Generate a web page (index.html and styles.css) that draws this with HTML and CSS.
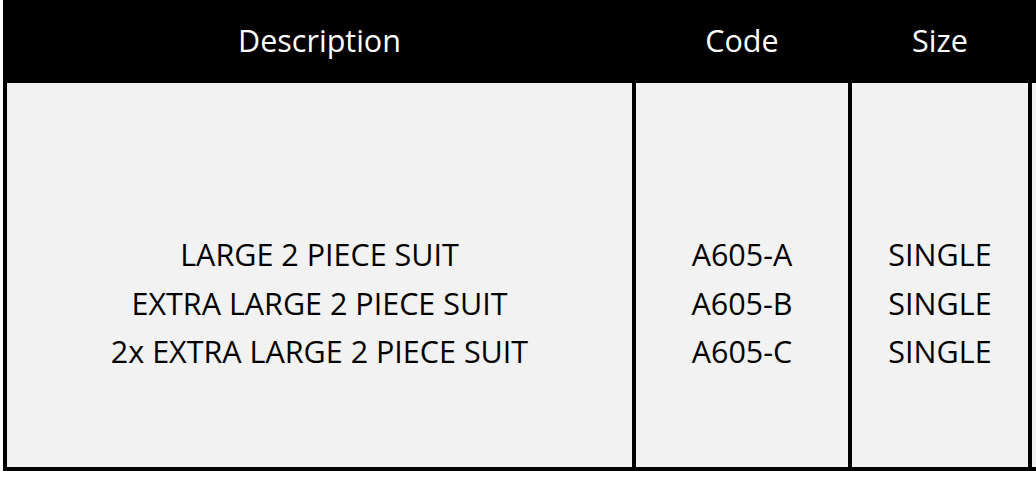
FILE: index.html
```html
<!DOCTYPE html>
<html lang="en">
<head>
<meta charset="utf-8">
<title>Suits</title>
<link rel="stylesheet" href="styles.css">
</head>
<body>
<div class="table">
  <div class="head">
    <div class="hcell">Description</div>
    <div class="hcell">Code</div>
    <div class="hcell">Size</div>
    <div class="hcell"></div>
  </div>
  <div class="body">
    <div class="cell">
      <div>LARGE 2 PIECE SUIT</div>
      <div>EXTRA LARGE 2 PIECE SUIT</div>
      <div>2x EXTRA LARGE 2 PIECE SUIT</div>
    </div>
    <div class="cell">
      <div>A605-A</div>
      <div>A605-B</div>
      <div>A605-C</div>
    </div>
    <div class="cell">
      <div>SINGLE</div>
      <div>SINGLE</div>
      <div>SINGLE</div>
    </div>
    <div class="cell"></div>
  </div>
</div>
</body>
</html>
```

FILE: styles.css
```css
html, body {
  margin: 0;
  padding: 0;
  background: #ffffff;
  overflow: hidden;
}
body {
  font-family: "Open Sans", "Noto Sans", sans-serif;
  font-size: 30.5px;
  color: #000;
}
.table {
  margin-left: 3px;
  width: 1033px;
}
.head, .body {
  display: grid;
  grid-template-columns: 629px 216px 180px 1fr;
}
.head {
  height: 83px;
  background: #000;
  color: #fff;
}
.hcell {
  text-align: center;
  line-height: 80px;
  padding-left: 4px;
}
.body {
  height: 384px;
  background: #f2f2f2;
  border-bottom: 4px solid #000;
}
.cell {
  border-left: 4px solid #000;
  text-align: center;
  line-height: 48.5px;
  padding-top: 147px;
}
```
